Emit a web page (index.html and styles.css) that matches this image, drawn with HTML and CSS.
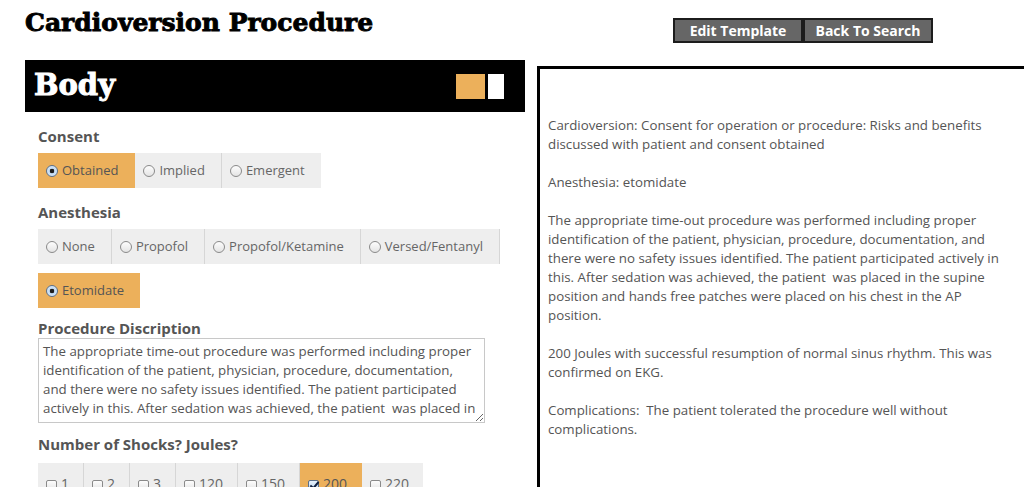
FILE: index.html
```html
<!DOCTYPE html>
<html>
<head>
<meta charset="utf-8">
<title>Cardioversion Procedure</title>
<link rel="stylesheet" href="styles.css">
</head>
<body>
<div class="page">
  <div class="col-left">
    <h1 class="title">Cardioversion Procedure</h1>
    <section class="panel">
      <div class="bar">
        <h2 class="bar-title">Body</h2>
        <div class="bar-tools">
          <span class="tool tool-orange"></span>
          <span class="tool tool-white"></span>
        </div>
      </div>
      <form class="form">
        <div class="field">
          <div class="field-label">Consent</div>
          <div class="options">
            <label class="opt selected"><input type="radio" name="consent" checked>Obtained</label>
            <label class="opt"><input type="radio" name="consent">Implied</label>
            <label class="opt"><input type="radio" name="consent">Emergent</label>
          </div>
        </div>
        <div class="field">
          <div class="field-label">Anesthesia</div>
          <div class="options">
            <label class="opt"><input type="radio" name="anes">None</label>
            <label class="opt"><input type="radio" name="anes">Propofol</label>
            <label class="opt"><input type="radio" name="anes">Propofol/Ketamine</label>
            <label class="opt"><input type="radio" name="anes">Versed/Fentanyl</label>
            <label class="opt selected"><input type="radio" name="anes" checked>Etomidate</label>
          </div>
        </div>
        <div class="field">
          <div class="field-label tight">Procedure Discription</div>
          <textarea class="desc">The appropriate time-out procedure was performed including proper identification of the patient, physician, procedure, documentation, and there were no safety issues identified. The patient participated actively in this. After sedation was achieved, the patient  was placed in the supine position and hands free patches were placed on his chest in the AP position.</textarea>
        </div>
        <div class="field">
          <div class="field-label after-text">Number of Shocks? Joules?</div>
          <div class="options checks">
            <label class="opt"><input type="checkbox">1</label>
            <label class="opt"><input type="checkbox">2</label>
            <label class="opt"><input type="checkbox">3</label>
            <label class="opt"><input type="checkbox">120</label>
            <label class="opt"><input type="checkbox">150</label>
            <label class="opt selected"><input type="checkbox" checked>200</label>
            <label class="opt"><input type="checkbox">220</label>
          </div>
        </div>
      </form>
    </section>
  </div>
  <div class="col-right">
    <div class="actions">
      <button class="btn" type="button">Edit Template</button><button class="btn" type="button">Back To Search</button>
    </div>
    <div class="preview">
      <p>Cardioversion: Consent for operation or procedure: Risks and benefits discussed with patient and consent obtained</p>
      <p>Anesthesia: etomidate</p>
      <p>The appropriate time-out procedure was performed including proper identification of the patient, physician, procedure, documentation, and there were no safety issues identified. The patient participated actively in this. After sedation was achieved, the patient&nbsp; was placed in the supine position and hands free patches were placed on his chest in the AP position.</p>
      <p>200 Joules with successful resumption of normal sinus rhythm. This was confirmed on EKG.</p>
      <p>Complications:&nbsp; The patient tolerated the procedure well without complications.</p>
    </div>
  </div>
</div>
</body>
</html>
```
FILE: styles.css
```css
html, body {
  margin: 0;
  padding: 0;
  background: #fff;
  overflow: hidden;
}
body {
  font-family: "Open Sans", "Liberation Sans", sans-serif;
  color: #555;
}
.page {
  display: flex;
  gap: 12px;
  padding-left: 25px;
  height: 487px;
}
.col-left {
  width: 500px;
  flex: none;
}
.col-right {
  flex: 1;
  display: flex;
  flex-direction: column;
}
.title {
  margin: 0;
  height: 60px;
  padding-top: 8px;
  box-sizing: border-box;
  font-family: "DejaVu Serif", "Liberation Serif", serif;
  font-weight: bold;
  font-size: 25px;
  line-height: 30px;
  color: #000;
  letter-spacing: 0;
  -webkit-text-stroke: 0.9px #000;
}
.bar {
  height: 52px;
  background: #000;
  display: flex;
  align-items: center;
  justify-content: space-between;
  padding: 0 21px 0 9px;
}
.bar-title {
  margin: 0;
  font-family: "DejaVu Serif", "Liberation Serif", serif;
  font-weight: bold;
  font-size: 29px;
  line-height: 36px;
  color: #fff;
  padding-bottom: 3px;
  -webkit-text-stroke: 1px #fff;
}
.bar-tools {
  display: flex;
  gap: 3px;
}
.tool {
  display: block;
  height: 25px;
}
.tool-orange {
  width: 29px;
  background: #ecb05b;
}
.tool-white {
  width: 16px;
  background: #fff;
}
.form {
  padding-left: 13px;
  margin: 0;
}
.field-label {
  font-weight: bold;
  font-size: 15px;
  line-height: 20px;
  color: #555;
  margin-top: 14px;
  margin-bottom: 7px;
}
.field-label.tight {
  margin-top: 10px;
  margin-bottom: 0;
}
.field-label.after-text {
  margin-top: 11px;
  margin-bottom: 9px;
}
.options {
  display: flex;
  flex-wrap: wrap;
  row-gap: 9px;
}
.opt {
  display: flex;
  align-items: center;
  background: #eeeeee;
  padding: 8px 16px 8px 8px;
  font-size: 13px;
  line-height: 19px;
  color: #666;
  border-right: 1px solid #d6d6d6;
}
.opt:last-child {
  border-right: none;
}
.opt.selected {
  background: #ecb05b;
  border-right-color: #ecb05b;
  color: #555;
}
.checks .opt {
  font-size: 14px;
  line-height: 22px;
  padding: 10px 14px 8px 8px;
}
.opt input {
  -webkit-appearance: none;
  appearance: none;
  margin: 0 4px 0 0;
  width: 12px;
  height: 12px;
  border: 1px solid #8a8a8a;
  background: linear-gradient(#fdfdfd, #e4e4e4);
  box-sizing: border-box;
  position: relative;
  flex: none;
}
.opt input[type="radio"] {
  border-radius: 50%;
}
.opt input[type="radio"]:checked {
  border-color: #5a6f8a;
  background: radial-gradient(circle, #1e1e1e 0 2px, #c2daf2 2.6px, #e4f0fb 100%);
}
.opt input[type="checkbox"] {
  border-radius: 2px;
  width: 11px;
  height: 11px;
  margin-top: 3px;
}
.opt input[type="checkbox"]:checked {
  border-color: #5a6f8a;
  background: linear-gradient(#e6f1fc, #bcd6f0);
}
.opt input[type="checkbox"]:checked::after {
  content: "";
  position: absolute;
  left: 3px;
  top: -1px;
  width: 3px;
  height: 7px;
  border: solid #102040;
  border-width: 0 2px 2px 0;
  transform: rotate(40deg);
}
.desc {
  display: block;
  width: 447px;
  height: 85px;
  box-sizing: border-box;
  margin: 0;
  padding: 3px 8px 3px 4px;
  border: 1px solid #c8c8c8;
  font-family: "Open Sans", "Liberation Sans", sans-serif;
  font-size: 13.3px;
  line-height: 19px;
  color: #555;
  overflow: hidden;
}
.actions {
  display: flex;
  margin: 18px 0 0 136px;
  height: 25px;
}
.btn {
  font-family: "Open Sans", "Liberation Sans", sans-serif;
  font-weight: bold;
  font-size: 14px;
  line-height: 21px;
  width: 130px;
  height: 25px;
  padding: 0;
  margin: 0;
  text-align: center;
  background: #666;
  color: #fff;
  border: 2px solid #1c1c1c;
  border-radius: 0;
}
.preview {
  margin-top: 23px;
  flex: 1;
  border-top: 3px solid #000;
  border-left: 3px solid #000;
  padding: 47px 21px 0 8px;
  font-size: 13.3px;
  line-height: 19px;
  color: #555;
}
.preview p {
  margin: 0 0 19px;
}
```
